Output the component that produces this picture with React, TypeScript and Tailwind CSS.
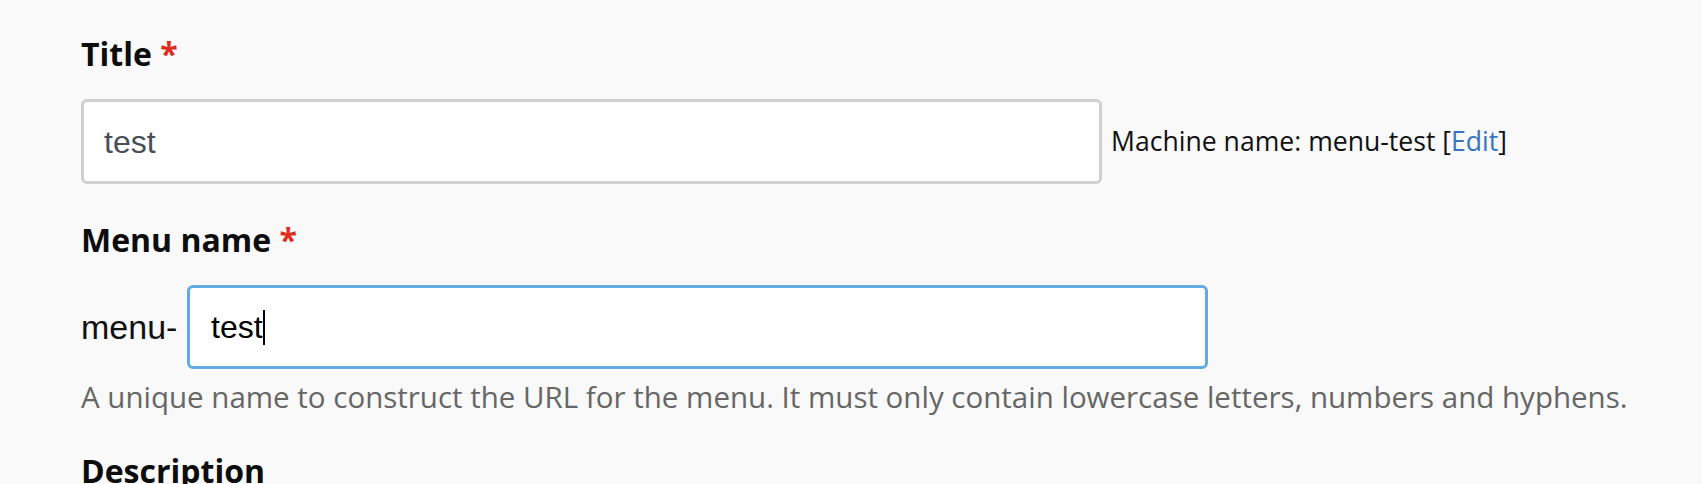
import React from "react";

export default function App() {
  return (
    <div className="w-[1702px] h-[484px] overflow-hidden bg-[#f9f9f9] pl-[81px] pt-[32px] font-['Open_Sans','Noto_Sans',sans-serif]">
      {/* Title */}
      <div className="text-[32px] leading-[44px] font-bold text-[#0d0d0d]">
        Title <span className="text-[#dd2b1c]">*</span>
      </div>
      <div className="mt-[23px] flex items-center">
        <div className="w-[1021px] h-[85px] border-[3px] border-[#d0d0d0] rounded-[6px] bg-white flex items-center pl-[20px] font-['Liberation_Sans',Arial,sans-serif] text-[32px] text-[#4a4f57]">
          test
        </div>
        <div className="ml-[9px] text-[26.6px] text-[#111]">
          Machine name: menu-test [<span className="text-[#3775c3]">Edit</span>]
        </div>
      </div>

      {/* Menu name */}
      <div className="mt-[34px] text-[32px] leading-[44px] font-bold text-[#0d0d0d]">
        Menu name <span className="text-[#dd2b1c]">*</span>
      </div>
      <div className="mt-[23px] flex items-center">
        <span className="w-[106px] font-['Liberation_Sans',Arial,sans-serif] text-[34px] text-[#111]">menu-</span>
        <div className="w-[1021px] h-[84px] border-[3px] border-[#62aadf] rounded-[6px] bg-white flex items-center pl-[21px] font-['Liberation_Sans',Arial,sans-serif] text-[32px] text-black">
          <span>test</span>
          <span className="inline-block w-[2px] h-[35px] bg-black"></span>
        </div>
      </div>
      <div className="mt-[8px] text-[29.5px] leading-[40px] text-[#666666]">
        A unique name to construct the URL for the menu. It must only contain lowercase letters, numbers and hyphens.
      </div>

      {/* Description */}
      <div className="mt-[32px] text-[32px] leading-[44px] font-bold text-[#0d0d0d]">
        Description
      </div>
    </div>
  );
}
